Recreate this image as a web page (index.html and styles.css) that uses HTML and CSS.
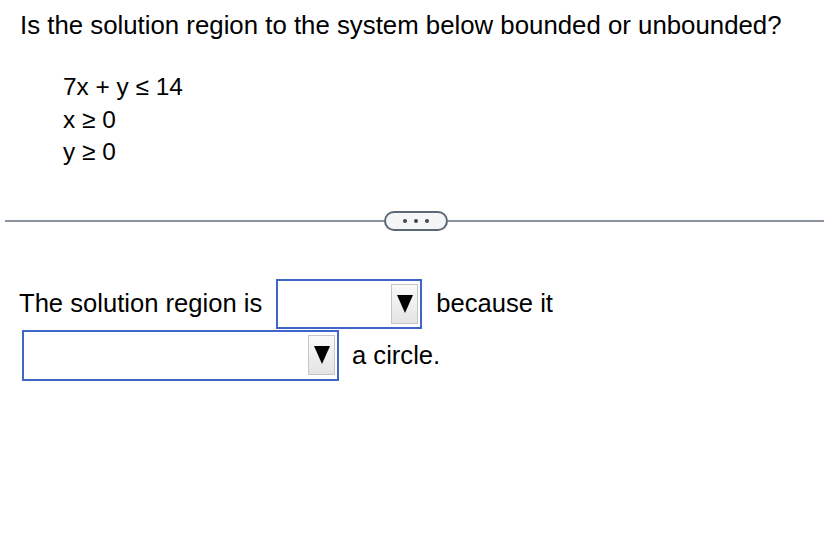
FILE: index.html
```html
<!DOCTYPE html>
<html>
<head>
<meta charset="utf-8">
<link rel="stylesheet" href="styles.css">
</head>
<body>
<div class="title">Is the solution region to the system below bounded or unbounded?</div>
<div class="system">
  <div class="eq">7x + y ≤ 14</div>
  <div class="eq">x ≥ 0</div>
  <div class="eq">y ≥ 0</div>
</div>
<div class="divider">
  <div class="line line-left"></div>
  <div class="pill"><span class="dot"></span><span class="dot"></span><span class="dot"></span></div>
  <div class="line line-right"></div>
</div>
<div class="row row-one">
  <span class="txt">The solution region is</span>
  <div class="select select-one"><div class="arrow"><span class="tri"></span></div></div>
  <span class="txt">because it</span>
</div>
<div class="row row-two">
  <div class="select select-two"><div class="arrow"><span class="tri"></span></div></div>
  <span class="txt">a circle.</span>
</div>
</body>
</html>
```
FILE: styles.css
```css
html, body {
  margin: 0;
  padding: 0;
  background: #ffffff;
}
body {
  font-family: "Liberation Sans", Arial, sans-serif;
  color: #000000;
  width: 824px;
  height: 554px;
  overflow: hidden;
}
.title {
  font-size: 25.8px;
  line-height: 30px;
  padding: 10px 0 0 20px;
  white-space: nowrap;
}
.system {
  margin-top: 31px;
  padding-left: 63px;
}
.eq {
  font-size: 24.4px;
  line-height: 32.5px;
  white-space: nowrap;
}
.divider {
  margin-top: 42px;
  height: 20px;
  display: flex;
  align-items: center;
  padding-left: 5px;
}
.line {
  height: 2px;
  background: #8a939e;
}
.line-left {
  width: 379px;
}
.line-right {
  flex: 1;
}
.pill {
  box-sizing: border-box;
  width: 64px;
  height: 20px;
  border: 2px solid #5d6875;
  border-radius: 10px;
  background: #f4f5f7;
  display: flex;
  align-items: center;
  justify-content: center;
  gap: 7px;
}
.dot {
  width: 4px;
  height: 4px;
  border-radius: 50%;
  background: #3f4650;
}
.row {
  display: flex;
  align-items: center;
  font-size: 25.6px;
  white-space: nowrap;
}
.row-one {
  margin-top: 48px;
  padding-left: 19px;
  gap: 14px;
}
.row-two {
  margin-top: 1px;
  padding-left: 22px;
  gap: 13px;
}
.select {
  box-sizing: border-box;
  border: 2px solid #3f66c6;
  background: #ffffff;
  display: flex;
  align-items: center;
  justify-content: flex-end;
  padding-right: 2px;
}
.select-one {
  width: 146px;
  height: 50px;
}
.select-two {
  width: 317px;
  height: 51px;
}
.arrow {
  box-sizing: border-box;
  width: 27px;
  height: 40px;
  border: 1px solid #c6c6c6;
  background: linear-gradient(#fafafa, #e4e4e4);
  display: flex;
  align-items: center;
  justify-content: center;
}
.tri {
  width: 0;
  height: 0;
  border-left: 8px solid transparent;
  border-right: 8px solid transparent;
  border-top: 18px solid #000000;
}
```
